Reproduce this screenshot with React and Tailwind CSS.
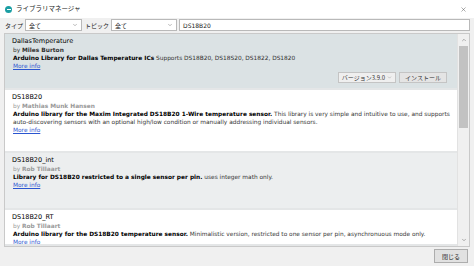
import { ChevronDown, ChevronUp, X } from "lucide-react";

// Arduino IDE library manager window, shrunk to 474x266.

const JP = { fontFamily: '"Noto Sans CJK JP", "DejaVu Sans", sans-serif' };
const BODY = { fontFamily: '"DejaVu Sans", Verdana, sans-serif' };

const LIBS = [
  {
    name: "DallasTemperature",
    author: "Miles Burton",
    lead: "Arduino Library for Dallas Temperature ICs",
    rest: " Supports DS18B20, DS18S20, DS1822, DS1820",
    bg: "bg-[#dbe2e4]",
    h: "h-[56px]",
    selected: true,
  },
  {
    name: "DS18B20",
    author: "Mathias Munk Hansen",
    lead: "Arduino library for the Maxim Integrated DS18B20 1-Wire temperature sensor.",
    rest: " This library is very simple and intuitive to use, and supports auto-discovering sensors with an optional high/low condition or manually addressing individual sensors.",
    bg: "bg-white",
    h: "h-[63px]",
  },
  {
    name: "DS18B20_int",
    author: "Rob Tillaart",
    lead: "Library for DS18B20 restricted to a single sensor per pin.",
    rest: " uses integer math only.",
    bg: "bg-[#eceeef]",
    h: "h-[57px]",
  },
  {
    name: "DS18B20_RT",
    author: "Rob Tillaart",
    lead: "Arduino library for the DS18B20 temperature sensor.",
    rest: " Minimalistic version, restricted to one sensor per pin, asynchronuous mode only.",
    bg: "bg-white",
    h: "flex-1",
  },
];

function Select({ label, w }) {
  return (
    <div className={`flex items-center justify-between h-[12px] border border-[#b9b9b9] bg-white px-[3px] ${w}`}>
      <span className="text-[6px] text-[#222]" style={JP}>{label}</span>
      <ChevronDown className="w-[6px] h-[6px] text-[#777]" strokeWidth={2} />
    </div>
  );
}

function LibRow({ lib }) {
  return (
    <div className={`${lib.bg} ${lib.h} border-b-2 border-[#e4e6e7] px-[7px] pt-[3px] overflow-hidden`}>
      <div className="text-[6.5px] leading-[8px] text-black" style={BODY}>{lib.name}</div>
      <div className="pl-[1px] mt-[1px] text-[5.85px] leading-[8px]" style={BODY}>
        <div className={lib.selected ? "text-[#333]" : "text-[#999]"}>
          by <span className="font-bold">{lib.author}</span>
        </div>
        <div className="text-[#333]">
          <span className="font-bold text-black">{lib.lead}</span>
          {lib.rest}
        </div>
        <div className="text-[#2b55d0] underline">More info</div>
      </div>
      {lib.selected && (
        <div className="flex justify-end gap-[3px] mt-[2px] pr-[3px]">
          <div className="flex items-center gap-[2px] h-[11px] border border-[#c4c4c4] bg-[#efefef] px-[3px] text-[6px] text-[#333]" style={JP}>
            バージョン3.9.0
            <ChevronDown className="w-[5px] h-[5px] text-[#888]" strokeWidth={2} />
          </div>
          <div className="flex items-center justify-center w-[48px] h-[11px] border border-[#c4c4c4] bg-[#e4e4e4] text-[6px] text-[#333]" style={JP}>
            インストール
          </div>
        </div>
      )}
    </div>
  );
}

export default function App() {
  return (
    <div className="w-[474px] h-[266px] bg-[#f0f0f0] flex flex-col overflow-hidden">
      <div className="h-[18px] bg-white flex items-center pl-[5px] pr-[7px]">
        <div className="w-[7px] h-[7px] rounded-full bg-[#1a9ea3] flex items-center justify-center">
          <div className="w-[4px] h-[1px] bg-white" />
        </div>
        <span className="ml-[4px] text-[6.5px] text-[#222]" style={JP}>ライブラリマネージャ</span>
        <div className="flex-1" />
        <X className="w-[7px] h-[7px] text-[#444]" strokeWidth={1.5} />
      </div>

      <div className="h-[14px] flex items-center pl-[5px] pr-[4px] gap-[2px]">
        <span className="text-[6px] text-[#222]" style={JP}>タイプ</span>
        <Select label="全て" w="w-[57px]" />
        <span className="ml-[1px] text-[6px] text-[#222]" style={JP}>トピック</span>
        <Select label="全て" w="w-[66px]" />
        <div className="flex-1 h-[12px] border border-[#b9b9b9] bg-white px-[3px] flex items-center">
          <span className="text-[6px] text-[#222]" style={BODY}>DS18B20</span>
        </div>
      </div>

      <div className="mx-[4px] mt-[1px] h-[214px] border border-[#c9c9c9] bg-white flex">
        <div className="flex-1 flex flex-col">
          {LIBS.map((lib) => (
            <LibRow key={lib.name} lib={lib} />
          ))}
        </div>
        <div className="w-[12px] bg-[#f0f0f0] border-l border-[#e2e2e2] flex flex-col items-center">
          <ChevronUp className="w-[6px] h-[6px] mt-[3px] text-[#666]" strokeWidth={2} />
          <div className="w-[9px] h-[82px] mt-[3px] bg-[#c2c2c2]" />
          <div className="flex-1" />
          <ChevronDown className="w-[6px] h-[6px] mb-[3px] text-[#666]" strokeWidth={2} />
        </div>
      </div>

      <div className="flex justify-end pr-[6px] pt-[2px]">
        <div className="w-[34px] h-[14px] bg-[#e1e1e1] border border-[#adadad] flex items-center justify-center text-[6px] text-[#222]" style={JP}>
          閉じる
        </div>
      </div>
    </div>
  );
}
